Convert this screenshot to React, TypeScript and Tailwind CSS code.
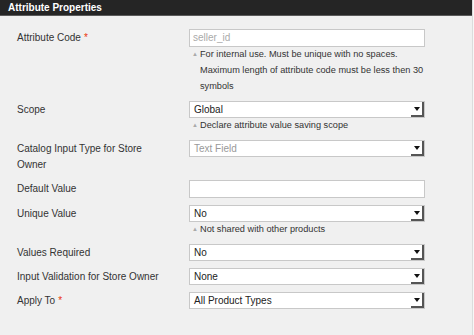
const font = { fontFamily: '"Liberation Sans", Arial, sans-serif' }

function Req() {
  return <span className="text-[#eb340a] ml-[3px]">*</span>
}

function Note({ children }: { children: React.ReactNode }) {
  return (
    <div className="flex text-[9.2px] leading-[16px] text-[#333] mt-[-1px]">
      <span className="text-[#aaa] text-[6px] w-[11px] pl-[3px] shrink-0">▲</span>
      <span>{children}</span>
    </div>
  )
}

function Select({ value, muted }: { value: string; muted?: boolean }) {
  return (
    <div className="flex h-[17px] bg-white border border-[#c8c8c8] items-center">
      <span className={`flex-1 pl-[4px] text-[10px] ${muted ? 'text-[#999]' : 'text-[#222]'}`}>{value}</span>
      <span className="flex h-[15px] w-[13px] items-center justify-center border-r-2 border-b-2 border-[#555] bg-white">
        <svg width="6" height="4" viewBox="0 0 6 4">
          <path d="M0 0h6L3 4z" fill="#111" />
        </svg>
      </span>
    </div>
  )
}

function Input({ placeholder }: { placeholder?: string }) {
  return (
    <div className="h-[18px] bg-white border border-[#c8c8c8] pl-[3px] text-[10px] leading-[16px] text-[#aaa]">
      {placeholder}
    </div>
  )
}

function Row({ label, children }: { label: React.ReactNode; children: React.ReactNode }) {
  return (
    <div className="flex items-start mb-[7px]">
      <div className="w-[189px] shrink-0 pl-[17px] pr-[20px] pt-px text-[10px] leading-[16px] text-[#333]">{label}</div>
      <div className="w-[236px]">{children}</div>
    </div>
  )
}

export default function App() {
  return (
    <div className="w-[474px] h-[335px] bg-[#f7f7f7]" style={font}>
      <div className="w-[473px] bg-[#f0f0f0] border-r border-b border-[#dcdcdc] pb-[22px]">
        <div className="h-[16px] bg-[#252525] border-b border-[#5a5a5a] pl-[8px] text-[10px] leading-[15px] font-bold text-white">
          Attribute Properties
        </div>
        <div className="pt-[13px]">
          <Row label={<>Attribute Code<Req /></>}>
            <Input placeholder="seller_id" />
            <Note>
              For internal use. Must be unique with no spaces. Maximum length of attribute code must be less then 30 symbols
            </Note>
          </Row>
          <Row label="Scope">
            <Select value="Global" />
            <Note>Declare attribute value saving scope</Note>
          </Row>
          <Row label="Catalog Input Type for Store Owner">
            <Select value="Text Field" muted />
          </Row>
          <Row label="Default Value">
            <Input />
          </Row>
          <Row label="Unique Value">
            <Select value="No" />
            <Note>Not shared with other products</Note>
          </Row>
          <Row label="Values Required">
            <Select value="No" />
          </Row>
          <Row label="Input Validation for Store Owner">
            <Select value="None" />
          </Row>
          <Row label={<>Apply To<Req /></>}>
            <Select value="All Product Types" />
          </Row>
        </div>
      </div>
    </div>
  )
}
